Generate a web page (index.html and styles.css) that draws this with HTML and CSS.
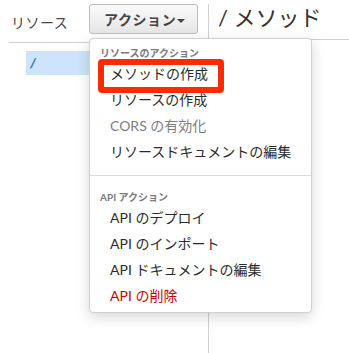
FILE: index.html
```html
<!DOCTYPE html>
<html lang="ja">
<head>
<meta charset="utf-8">
<link rel="stylesheet" href="styles.css">
</head>
<body>
<div class="page">
  <div class="left">
    <div class="lhead">
      <span class="title">リソース</span>
      <div class="actions">
        <button class="btn">アクション<span class="caret"></span></button>
        <div class="menu">
          <div class="mhead first">リソースのアクション</div>
          <div class="item hl">メソッドの作成<span class="mark"></span></div>
          <div class="item">リソースの作成</div>
          <div class="item muted">CORS の有効化</div>
          <div class="item">リソースドキュメントの編集</div>
          <div class="divider"></div>
          <div class="mhead">API アクション</div>
          <div class="item">API のデプロイ</div>
          <div class="item">API のインポート</div>
          <div class="item">API ドキュメントの編集</div>
          <div class="item danger">API の削除</div>
        </div>
      </div>
    </div>
    <div class="tree">
      <div class="node sel">/</div>
    </div>
  </div>
  <div class="right">
    <div class="rhead">/ メソッド</div>
  </div>
</div>
</body>
</html>
```

FILE: styles.css
```css
* { box-sizing: border-box; }
html, body {
  margin: 0;
  padding: 0;
  background: #fff;
}
body {
  font-family: Lato, "Noto Sans CJK JP", sans-serif;
  color: #333;
  width: 349px;
  height: 353px;
  overflow: hidden;
}
.page {
  display: flex;
  height: 353px;
}
.left {
  width: 209px;
  margin-top: 4px;
  border-right: 1px solid #cfcfcf;
  flex: none;
}
.lhead {
  margin-left: 9px;
  height: 39px;
  border-bottom: 1px solid #cfcfcf;
  display: flex;
  align-items: flex-start;
  padding-left: 2px;
}
.title {
  width: 78px;
  font-size: 14px;
  line-height: 20px;
  padding-top: 9px;
  color: #444;
  letter-spacing: 0.5px;
}
.actions {
  position: relative;
}
.btn {
  width: 109px;
  height: 30px;
  padding: 0 0 0 14px;
  margin: 0;
  display: flex;
  align-items: center;
  border: 1px solid #bdbdbd;
  border-radius: 3px;
  background: linear-gradient(#fafafa, #e6e6e6);
  font-family: Lato, "Noto Sans CJK JP", sans-serif;
  font-weight: bold;
  font-size: 14px;
  letter-spacing: 0.6px;
  color: #444;
}
.caret {
  width: 0;
  height: 0;
  margin-left: 1px;
  margin-top: 3px;
  border-left: 4px solid transparent;
  border-right: 4px solid transparent;
  border-top: 4px solid #444;
}
.menu {
  position: absolute;
  left: 0;
  top: 34px;
  width: 223px;
  height: 275px;
  background: #fff;
  border: 1px solid #d0d0d0;
  border-radius: 4px;
  box-shadow: 0 4px 14px rgba(0, 0, 0, 0.16);
  padding-top: 6px;
  z-index: 5;
}
.mhead {
  font-size: 10px;
  font-weight: bold;
  line-height: 16px;
  color: #7a7a7a;
  padding-left: 10px;
}
.item {
  position: relative;
  font-size: 14px;
  line-height: 26px;
  height: 26px;
  padding-left: 20px;
  color: #2b2b2b;
  white-space: nowrap;
}
.item.muted { color: #7d7d7d; }
.item.danger { color: #d40000; }
.mark {
  position: absolute;
  left: 8px;
  top: -2px;
  width: 126px;
  height: 34px;
  border: 6px solid #ff2a00;
  border-radius: 4px;
}
.divider {
  height: 1px;
  background: #dcdcdc;
  margin: 10px 0 13px;
}
.tree {
  padding: 8px 0 0 26px;
}
.node {
  height: 24px;
  line-height: 24px;
  padding-left: 4px;
  font-size: 14px;
  font-weight: bold;
  font-style: italic;
  color: #2f6fb6;
}
.node.sel {
  background: #cde4fa;
}
.right {
  flex: 1;
}
.rhead {
  height: 40px;
  border-bottom: 1px solid #cfcfcf;
  padding-left: 9px;
  font-size: 22px;
  line-height: 36px;
  color: #333;
}
```
